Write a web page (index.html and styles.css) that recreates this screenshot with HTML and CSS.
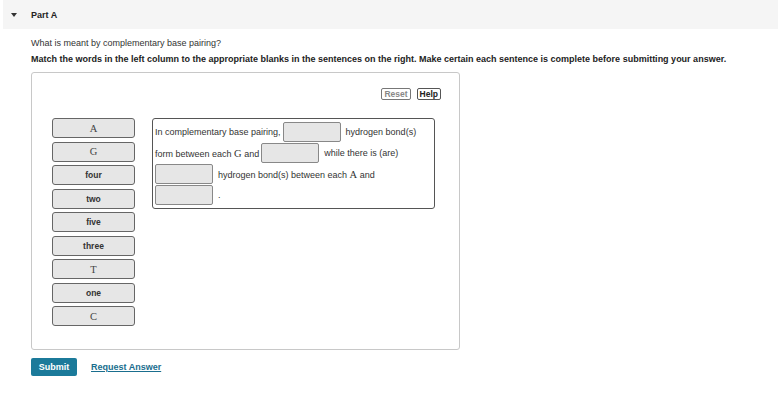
FILE: index.html
```html
<!DOCTYPE html>
<html lang="en">
<head>
    <meta charset="UTF-8">
    <title>Part A</title>
    <link rel="stylesheet" href="styles.css">
</head>
<body>
    <div class="part-header">
        <span class="caret"></span>
        <span class="part-title">Part A</span>
    </div>

    <div class="part-body">
        <p class="question">What is meant by complementary base pairing?</p>
        <p class="instructions">Match the words in the left column to the appropriate blanks in the sentences on the right. Make certain each sentence is complete before submitting your answer.</p>

        <div class="workspace">
            <div class="tools">
                <button class="tool-btn disabled">Reset</button>
                <button class="tool-btn">Help</button>
            </div>

            <div class="match-area">
                <div class="word-list">
                    <div class="word math">A</div>
                    <div class="word math">G</div>
                    <div class="word">four</div>
                    <div class="word">two</div>
                    <div class="word">five</div>
                    <div class="word">three</div>
                    <div class="word math">T</div>
                    <div class="word">one</div>
                    <div class="word math">C</div>
                </div>

                <div class="sentence">
                    <div class="line">
                        <span>In complementary base pairing,</span>
                        <span class="blank"></span>
                        <span>hydrogen bond(s)</span>
                    </div>
                    <div class="line">
                        <span>form between each <i class="math">G</i> and</span>
                        <span class="blank"></span>
                        <span>while there is (are)</span>
                    </div>
                    <div class="line">
                        <span class="blank"></span>
                        <span>hydrogen bond(s) between each <i class="math">A</i> and</span>
                    </div>
                    <div class="line">
                        <span class="blank"></span>
                        <span>.</span>
                    </div>
                </div>
            </div>
        </div>

        <div class="actions">
            <button class="submit-btn">Submit</button>
            <a href="#" class="request-link">Request Answer</a>
        </div>
    </div>
</body>
</html>
```

FILE: styles.css
```css
body {
    margin: 0;
    font-family: "Liberation Sans", Arial, sans-serif;
    color: #222;
    background: #fff;
}
.part-header {
    margin-left: 3px;
    height: 29px;
    background-color: #f5f5f5;
    display: flex;
    align-items: center;
}
.caret {
    width: 0;
    height: 0;
    margin-left: 8px;
    border-left: 3px solid transparent;
    border-right: 3px solid transparent;
    border-top: 4px solid #333;
}
.part-title {
    margin-left: 14px;
    font-size: 9px;
    font-weight: bold;
    color: #222;
}
.part-body {
    padding-left: 31px;
}
.question {
    margin: 9px 0 0;
    font-size: 9px;
    line-height: 11px;
    color: #333;
}
.instructions {
    margin: 5px 0 0;
    font-size: 9px;
    line-height: 11px;
    font-weight: bold;
    color: #222;
}
.workspace {
    margin-top: 7px;
    width: 429px;
    height: 278px;
    border: 1px solid #c8c8c8;
    border-radius: 3px;
    box-sizing: border-box;
    padding: 15px 18px 0 20px;
}
.tools {
    display: flex;
    justify-content: flex-end;
    gap: 6px;
}
.tool-btn {
    font-family: "Liberation Sans", Arial, sans-serif;
    font-size: 8.5px;
    font-weight: bold;
    height: 12px;
    padding: 0 2px;
    line-height: 10px;
    background: #fff;
    color: #222;
    border: 1px solid #555;
    border-radius: 2px;
}
.tool-btn.disabled {
    color: #888;
    border-color: #777;
}
.match-area {
    display: flex;
    gap: 17px;
    margin-top: 18px;
}
.word-list {
    display: flex;
    flex-direction: column;
    gap: 3.5px;
}
.word {
    width: 83px;
    height: 20px;
    box-sizing: border-box;
    border: 1px solid #666;
    border-radius: 3px;
    background-color: #e6e6e6;
    display: flex;
    align-items: center;
    justify-content: center;
    font-size: 8.5px;
    font-weight: bold;
    color: #333;
}
.math {
    font-family: "Liberation Serif", "Times New Roman", serif;
    font-style: normal;
    font-weight: normal;
    font-size: 10.5px;
}
.word.math {
    font-size: 10.5px;
    color: #444;
}
.sentence {
    width: 283px;
    height: 91px;
    box-sizing: border-box;
    border: 1px solid #555;
    border-radius: 3px;
    padding: 3px 2px;
    display: flex;
    flex-direction: column;
    gap: 1px;
    font-size: 9px;
    color: #333;
}
.line {
    display: flex;
    align-items: center;
    height: 20px;
}
.blank {
    width: 58px;
    height: 20px;
    box-sizing: border-box;
    border: 1px solid #888;
    border-radius: 2px;
    background-color: #e6e6e6;
    margin-right: 5px;
}
.line span:first-child:not(.blank) {
    margin-right: 2px;
}
.actions {
    display: flex;
    align-items: center;
    gap: 14px;
    margin-top: 8px;
}
.submit-btn {
    width: 46px;
    height: 18px;
    border: none;
    border-radius: 2px;
    background-color: #1b7a9a;
    color: #fff;
    font-family: "Liberation Sans", Arial, sans-serif;
    font-size: 9px;
    font-weight: bold;
    padding: 0;
}
.request-link {
    font-size: 9px;
    font-weight: bold;
    color: #1a6e8e;
    text-decoration: underline;
}
```
